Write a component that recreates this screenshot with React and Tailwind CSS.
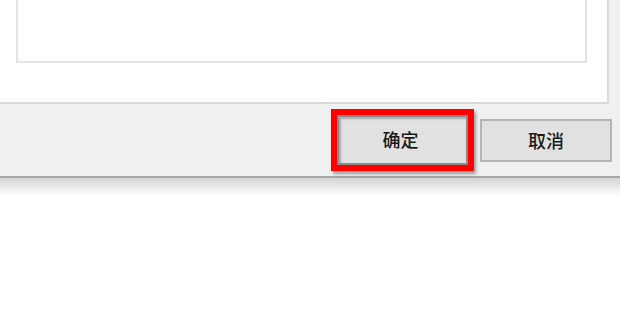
export default function App() {
  return (
    <div className="w-[620px] h-[309px] bg-white overflow-hidden" style={{ fontFamily: '"Microsoft YaHei", "Noto Sans CJK SC", sans-serif' }}>
      <div className="bg-[#f0f0f0] h-[178px] flex flex-col border-b-[2px] border-[#a6a6a6]">
        <div className="h-[104px] w-[609px] bg-white border-r-[2px] border-b-[2px] border-[#dadada] pl-[16px] pr-[20px] shrink-0">
          <div className="h-[63px] w-[571px] border-l-[2px] border-r-[2px] border-b-[2px] border-[#e4e4e4]" />
        </div>
        <div className="flex-1 flex justify-end items-center gap-[6px] pr-[8px]">
          <div className="w-[143px] h-[62px] border-[6px] border-[#ff0000] shadow-[2px_3px_3px_rgba(0,0,0,0.35)] flex">
            <button className="flex-1 bg-[#e1e1e1] border-[2px] border-[#8a8a8a] shadow-[inset_2px_2px_2px_rgba(0,0,0,0.25)] flex items-center justify-center text-[18px] font-medium text-[#1a1a1a] pb-[2px] pr-[4px]">
              确定
            </button>
          </div>
          <button className="w-[132px] h-[43px] bg-[#e1e1e1] border-[2px] border-[#b5b5b5] flex items-center justify-center text-[18px] font-medium text-[#1a1a1a]">
            取消
          </button>
        </div>
      </div>
      <div className="h-[18px] bg-gradient-to-b from-[#d4d4d4] to-white" />
    </div>
  );
}
